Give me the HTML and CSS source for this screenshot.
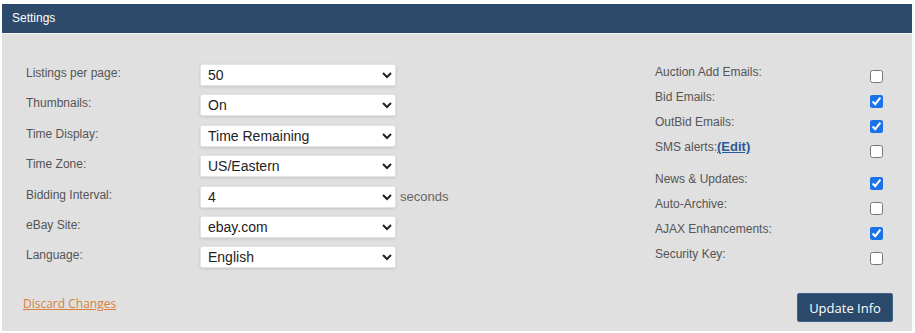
FILE: index.html
```html
<!DOCTYPE html>
<html>
<head>
<meta charset="utf-8">
<link rel="stylesheet" href="styles.css">
</head>
<body>
<div class="panel">
  <div class="panel-head">Settings</div>
  <div class="panel-body">
    <div class="columns">
      <div class="form-grid">
        <label class="lbl">Listings per page:</label>
        <select class="sel"><option>50</option></select>
        <span></span>
        <label class="lbl">Thumbnails:</label>
        <select class="sel"><option>On</option></select>
        <span></span>
        <label class="lbl">Time Display:</label>
        <select class="sel"><option>Time Remaining</option></select>
        <span></span>
        <label class="lbl">Time Zone:</label>
        <select class="sel"><option>US/Eastern</option></select>
        <span></span>
        <label class="lbl">Bidding Interval:</label>
        <select class="sel"><option>4</option></select>
        <span class="unit">seconds</span>
        <label class="lbl">eBay Site:</label>
        <select class="sel"><option>ebay.com</option></select>
        <span></span>
        <label class="lbl">Language:</label>
        <select class="sel"><option>English</option></select>
        <span></span>
      </div>
      <div class="checks">
        <div class="check-row"><span class="clbl">Auction Add Emails:</span><input type="checkbox" class="cb"></div>
        <div class="check-row"><span class="clbl">Bid Emails:</span><input type="checkbox" class="cb" checked></div>
        <div class="check-row"><span class="clbl">OutBid Emails:</span><input type="checkbox" class="cb" checked></div>
        <div class="check-row"><span class="clbl">SMS alerts:<a class="edit" href="#">(Edit)</a></span><input type="checkbox" class="cb"></div>
        <div class="check-row spaced"><span class="clbl">News &amp; Updates:</span><input type="checkbox" class="cb" checked></div>
        <div class="check-row"><span class="clbl">Auto-Archive:</span><input type="checkbox" class="cb"></div>
        <div class="check-row"><span class="clbl">AJAX Enhancements:</span><input type="checkbox" class="cb" checked></div>
        <div class="check-row"><span class="clbl">Security Key:</span><input type="checkbox" class="cb"></div>
      </div>
    </div>
    <div class="footer">
      <a class="discard" href="#">Discard Changes</a>
      <button class="update">Update Info</button>
    </div>
  </div>
</div>
</body>
</html>
```

FILE: styles.css
```css
html, body {
  margin: 0;
  padding: 0;
  background: #ffffff;
}

body {
  font-family: "Liberation Sans", Arial, sans-serif;
}

.panel {
  margin: 4px 3px 0 2px;
  width: 910px;
}

.panel-head {
  background: #2d4a6a;
  color: #ffffff;
  font-size: 12px;
  line-height: 29px;
  height: 29px;
  padding-left: 10px;
  border-bottom: 1px solid #f2f4f6;
}

.panel-body {
  background: #e0e0e0;
  padding: 30px 19px 9px 19px;
}

.columns {
  display: flex;
  justify-content: space-between;
  align-items: flex-start;
  margin: 0 7px 0 5px;
}

.form-grid {
  display: grid;
  grid-template-columns: 174px 196px auto;
  row-gap: 8.4px;
  align-items: start;
}

.lbl {
  font-size: 12px;
  line-height: 15px;
  padding-top: 2px;
  color: #555555;
}

.sel {
  width: 196px;
  height: 22px;
  margin: 0;
  border: 1px solid #e4e4e4;
  border-radius: 2px;
  background-color: #ffffff;
  box-shadow: 0 1px 3px rgba(0, 0, 0, 0.12);
  font-family: "Liberation Sans", Arial, sans-serif;
  font-size: 14px;
  color: #222222;
  padding: 0 3px;
  outline: none;
}

.unit {
  font-size: 13px;
  color: #666666;
  line-height: 22px;
  padding-left: 4px;
}

.checks {
  display: flex;
  flex-direction: column;
  width: 231px;
  padding-top: 1px;
}

.check-row {
  display: flex;
  justify-content: space-between;
  align-items: flex-start;
  height: 25px;
}

.check-row.spaced {
  margin-top: 7px;
}

.clbl {
  font-size: 12px;
  line-height: 14px;
  color: #555555;
}

.edit {
  color: #2a5a96;
  font-weight: bold;
  font-size: 13px;
}

.cb {
  width: 13px;
  height: 13px;
  margin: 5px 3px 0 0;
  accent-color: #1a73e8;
}

.footer {
  display: flex;
  justify-content: space-between;
  align-items: flex-start;
  margin-top: 21px;
}

.discard {
  font-family: "Open Sans", sans-serif;
  font-size: 12px;
  line-height: 16px;
  padding-top: 3px;
  padding-left: 2px;
  color: #d9803f;
}

.update {
  width: 96px;
  height: 29px;
  margin: 0;
  background: #2b4a6b;
  color: #ffffff;
  border: 1px solid #3f6388;
  border-radius: 2px;
  font-family: "Open Sans", sans-serif;
  font-size: 13px;
  padding: 0;
}
```
